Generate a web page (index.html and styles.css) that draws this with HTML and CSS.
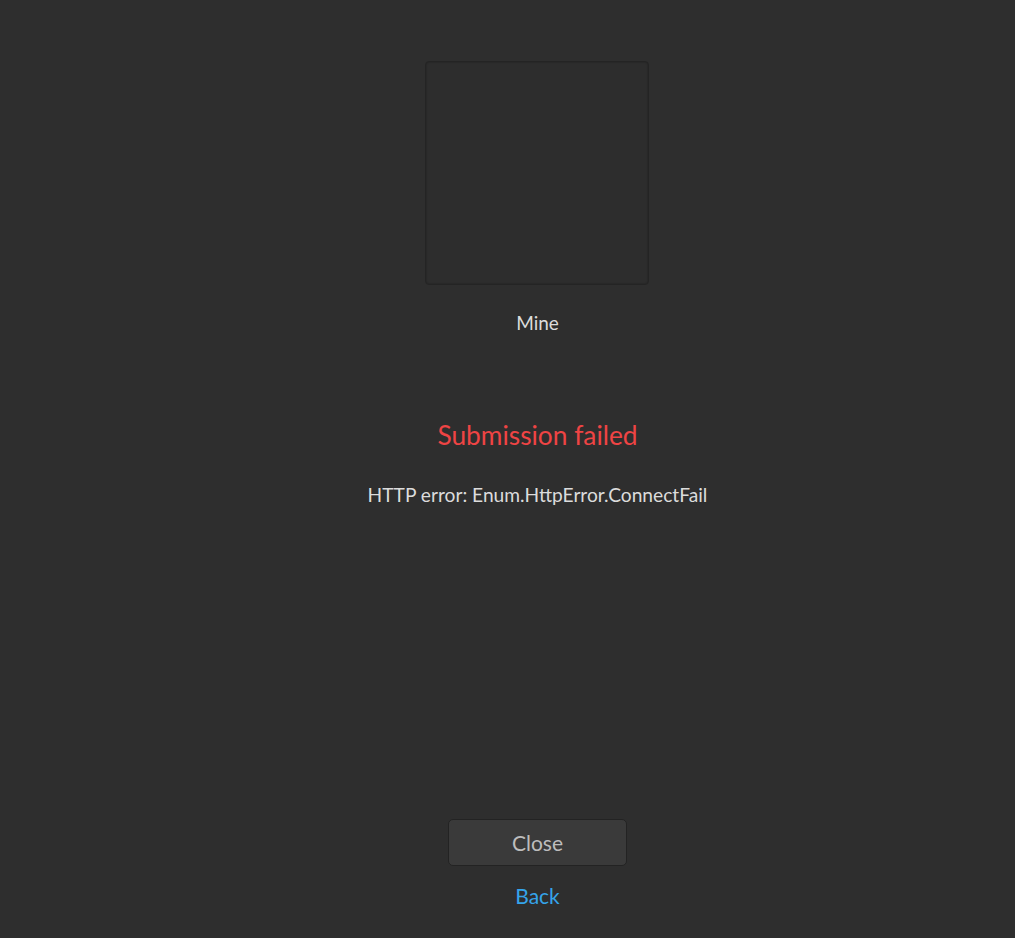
FILE: index.html
```html
<!DOCTYPE html>
<html>
<head>
<meta charset="utf-8">
<link rel="stylesheet" href="styles.css">
</head>
<body>
<div class="page">
  <div class="top">
    <div class="thumb"></div>
    <div class="name">Mine</div>
    <div class="title">Submission failed</div>
    <div class="message">HTTP error: Enum.HttpError.ConnectFail</div>
  </div>
  <div class="actions">
    <button class="close">Close</button>
    <a class="back">Back</a>
  </div>
</div>
</body>
</html>
```
FILE: styles.css
```css
html, body {
  margin: 0;
  padding: 0;
  background: #2e2e2e;
  height: 100%;
}
.page {
  height: 938px;
  box-sizing: border-box;
  padding-left: 60px;
  display: flex;
  flex-direction: column;
  align-items: center;
  justify-content: space-between;
  font-family: "Lato", "Liberation Sans", sans-serif;
}
.top {
  display: flex;
  flex-direction: column;
  align-items: center;
  padding-top: 61px;
}
.thumb {
  width: 222px;
  height: 222px;
  border: 1px solid #242424;
  border-radius: 4px;
  background: #2d2d2d;
  box-shadow: inset 0 0 2px rgba(0,0,0,0.35);
}
.name {
  margin-top: 26px;
  font-size: 19px;
  line-height: 24px;
  color: #dcdcdc;
}
.title {
  margin-top: 85px;
  font-size: 26.3px;
  line-height: 30px;
  color: #ef4444;
}
.message {
  margin-top: 33px;
  font-size: 19.2px;
  line-height: 24px;
  color: #dcdcdc;
}
.actions {
  display: flex;
  flex-direction: column;
  align-items: center;
  padding-bottom: 29px;
}
.close {
  width: 179px;
  height: 47px;
  background: #3a3a3a;
  border: 1px solid #232323;
  border-radius: 5px;
  color: #bdbdbd;
  font-family: inherit;
  font-size: 21px;
  padding: 0;
}
.back {
  margin-top: 17px;
  font-size: 21px;
  line-height: 26px;
  color: #35a4ea;
}
```
